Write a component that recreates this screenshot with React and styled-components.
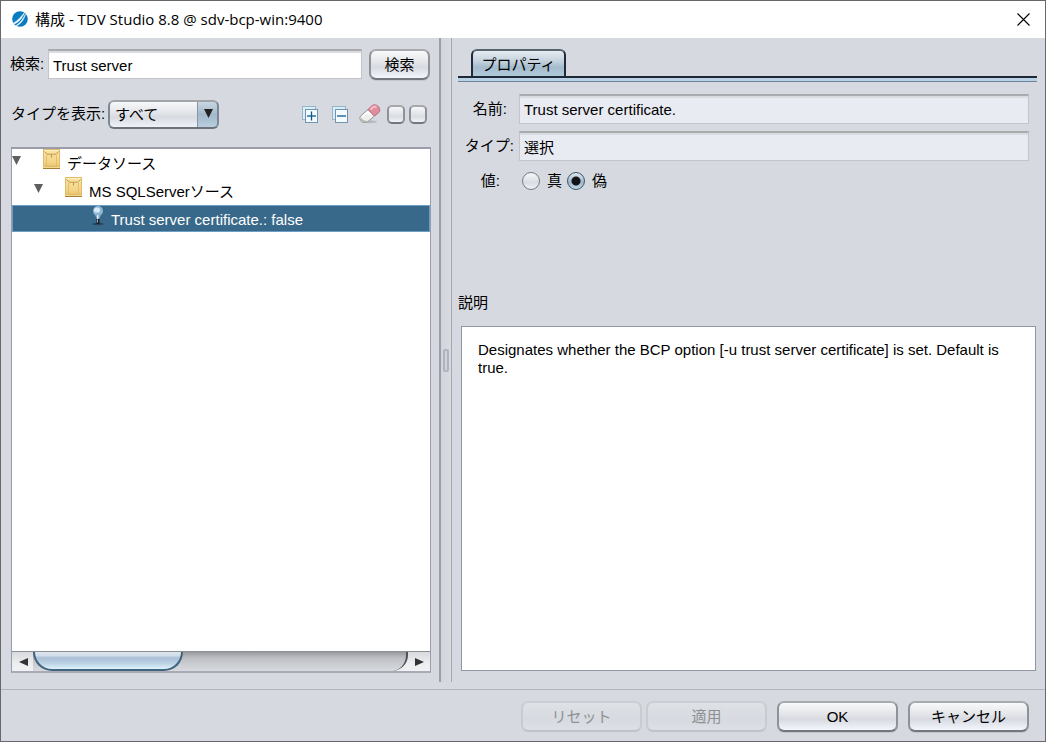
import React, { useState } from "react";
import styled, { createGlobalStyle } from "styled-components";

const GlobalStyle = createGlobalStyle`
  * { box-sizing: border-box; }
  body {
    margin: 0;
    background: #d6d9e0;
    color: #000;
    font: 15px/18px "Liberation Sans", "Noto Sans CJK JP", sans-serif;
  }
  button, input, select { font: inherit; color: inherit; margin: 0; }
`;

const Dialog = styled.div`
  display: flex;
  flex-direction: column;
  min-height: 100vh;
  border: 1px solid #68686c;
  background: #d6d9e0;
`;

const TitleBar = styled.header`
  display: flex;
  align-items: center;
  height: 37px;
  padding: 0 15px 1px 11px;
  background: #fff;
`;

const Title = styled.h1`
  flex: 1;
  margin: 0 0 0 7px;
  font: 400 15px/20px "Open Sans", "Noto Sans CJK JP", sans-serif;
`;

const PlainButton = styled.button`
  display: flex;
  padding: 0;
  border: 0;
  background: none;
`;

const Body = styled.main`
  flex: 1;
  display: flex;
  padding-bottom: 7px;
`;

const LeftPane = styled.section`
  flex: 0 0 438px;
  display: flex;
  flex-direction: column;
  padding: 10px 8px 9px 9px;
`;

const RightPane = styled.section`
  flex: 1;
  min-width: 0;
  display: flex;
  flex-direction: column;
  padding: 11px 9px 11px 6px;
`;

const Splitter = styled.div`
  flex: 0 0 13px;
  display: flex;
  align-items: center;
  justify-content: center;
  border-left: 2px solid #9b9eaa;
  border-right: 1px solid #a4a7af;
  background: linear-gradient(90deg, #d2d5dc, #d8dbe0);
`;

const Grip = styled.span`
  width: 6px;
  height: 23px;
  border: 2px solid #b0b3bc;
  border-radius: 2px;
  background: #d0d3da;
`;

const SearchRow = styled.form`
  display: flex;
  align-items: center;
  height: 32px;
  padding-right: 1px;
`;

const SearchLabel = styled.label`
  flex: 0 0 38px;
  white-space: nowrap;
`;

const TextField = styled.input`
  flex: 1;
  min-width: 0;
  height: 30px;
  padding: 1px 4px 0;
  border: 1px solid #c3c5ca;
  border-top: 2px solid #a9abae;
  border-radius: 0;
  outline: 0;
  background: ${(p) => (p.readOnly ? "#e8ebf2" : "#fff")};
  box-shadow: inset 0 2px 1px #d9dbdf;
`;

const MetalButton = styled.button`
  width: ${(p) => p.$width}px;
  height: 31px;
  padding: 1px 0 0;
  border: 2px solid #8d8f95;
  border-color: #a8aaae #909298 #74767b;
  border-radius: 7px;
  background: linear-gradient(#f8f9fa 0%, #e4e6ea 40%, #d7dae0 60%, #e5e8ef 80%, #f3f6fc 100%);
  box-shadow: 0 1px 0 #c3c6cc;

  &:disabled {
    color: #8e9094;
    border-color: #cbced3 #c8cbd0 #bfc2c7;
    background: linear-gradient(#dee1e5, #d7dae0 60%, #dcdfe6);
    box-shadow: none;
  }
`;

const SearchButton = styled(MetalButton)`
  margin-left: 7px;
`;

const FilterRow = styled.div`
  display: flex;
  align-items: center;
  height: 30px;
  margin-top: 19px;
`;

const FilterLabel = styled.label`
  flex: 0 0 98px;
  padding-left: 1px;
  white-space: nowrap;
`;

const SelectBox = styled.div`
  position: relative;
  width: 111px;
  height: 29px;
`;

const Select = styled.select`
  appearance: none;
  width: 100%;
  height: 100%;
  padding: 1px 26px 0 5px;
  border: 2px solid #85888f;
  border-color: #a2a4a9 #7c8895 #6e7176;
  border-radius: 6px;
  background:
    linear-gradient(#8396a8, #8396a8) right 19px top / 1px 100% no-repeat,
    linear-gradient(#c9d7e2, #a2b8cb 50%, #b8cfdf) right top / 19px 100% no-repeat,
    linear-gradient(#f7f8f9, #e2e4e9 45%, #d7dae0 60%, #eff2f9);
`;

const SelectArrow = styled.svg`
  position: absolute;
  top: 9px;
  right: 6px;
  pointer-events: none;
`;

const Tools = styled.div`
  display: flex;
  align-items: center;
  margin-left: auto;
  padding-right: 4px;
`;

const ToolButton = styled(PlainButton)`
  width: ${(p) => p.$width}px;
`;

const BlankButton = styled.button`
  width: 18px;
  height: 19px;
  padding: 0;
  margin-left: 4px;
  border: 2px solid #8b8d93;
  border-color: #a6a8ac #8f9197 #74767b;
  border-radius: 5px;
  background: linear-gradient(#f6f7f8, #dadde2 65%, #f0f3f8);
`;

const TreePanel = styled.div`
  flex: 1;
  display: flex;
  flex-direction: column;
  margin-top: 18px;
  margin-left: 1px;
  border: 2px solid #9a9da9;
  border-width: 2px 1px 2px 1px;
  border-bottom-color: #a8abb6;
  background: #fff;
`;

const Tree = styled.ul`
  flex: 1;
  margin: 0;
  padding: 0;
  list-style: none;
`;

const TreeRow = styled.li`
  display: flex;
  height: ${(p) => (p.$selected ? 27 : 28)}px;
  padding-left: ${(p) => p.$indent}px;
  color: ${(p) => (p.$selected ? "#fff" : "#000")};
  background: ${(p) => (p.$selected ? "#39698a" : "transparent")};
  border: 1px solid ${(p) => (p.$selected ? "#6f9ec5" : "transparent")};
  border-width: ${(p) => (p.$selected ? "1px" : "0")};
`;

const TreeText = styled.span`
  align-self: center;
  padding-top: 2px;
  margin-left: 7px;
  white-space: nowrap;
`;

const Disclosure = styled.svg`
  flex: none;
  margin: 7px 22px 0 0;
`;

const ScrollBar = styled.div`
  display: flex;
  height: 20px;
  border-top: 1px solid #8c8f96;
  background: linear-gradient(#d8dadd, #eceef0 60%, #f0f2f3);
`;

const ScrollButton = styled.button`
  display: flex;
  align-items: center;
  justify-content: center;
  width: 22px;
  padding: 0;
  border: 0;
  background: none;
`;

const ScrollTrack = styled.div`
  flex: 1;
  display: flex;
  margin-left: -1px;
  border-right: 2px solid #4f5155;
  border-radius: 0 0 16px 0;
  background: linear-gradient(#97999d, #bcbec2 30%, #cccfd4 70%, #d8dae0);
`;

const ScrollThumb = styled.div`
  width: 150px;
  border: 2px solid #41647e;
  border-top: 0;
  border-radius: 0 0 20px 20px;
  background: linear-gradient(#dce5ed, #d3dfea 20%, #a9c0d6 35%, #b9d0e3 65%, #dff3fc);
`;

const TabStrip = styled.div`
  display: flex;
  padding-left: 13px;
`;

const Tab = styled.button`
  width: 95px;
  height: 29px;
  padding: 1px 0 0;
  margin-bottom: -2px;
  border: 2px solid #334252;
  border-color: #59646f #1f2b3c;
  border-bottom: 0;
  border-radius: 6px 6px 0 0;
  background: linear-gradient(#e5ecf1, #c2d0dc 40%, #a4bbcc 60%, #b4cddd);
`;

const TabRule = styled.div`
  height: 6px;
  margin-right: -1px;
  border-top: 2px solid #1f2838;
  border-bottom: 1px solid #6f8498;
  background: #b9d1e4;
`;

const Fields = styled.div`
  display: grid;
  grid-template-columns: 56px 1fr;
  grid-template-rows: 31px 31px 28px;
  row-gap: 6px;
  column-gap: 5px;
  align-items: center;
  margin: 11px 7px 0 0;
`;

const FieldLabel = styled.label`
  justify-self: end;
  padding-right: ${(p) => p.$inset || 0}px;
  white-space: nowrap;
`;

const Choices = styled.div`
  display: flex;
  align-items: center;
  gap: 5px;
  padding-left: 3px;
`;

const Choice = styled.label`
  display: flex;
  align-items: center;
  gap: 7px;
`;

const Radio = styled.input`
  appearance: none;
  width: 18px;
  height: 18px;
  border: 1px solid #76797f;
  border-radius: 50%;
  background: linear-gradient(#f7f8f9, #d9dce2 60%, #eef1f7);

  &:checked {
    border-color: #3d5569;
    background:
      radial-gradient(circle, #111417 0 4px, transparent 5px),
      linear-gradient(#dbe5ed, #9fb7ca 60%, #c0d9e9);
  }
`;

const DescriptionTitle = styled.h2`
  margin: 99px 0 14px 0;
  font-size: 15px;
  line-height: 18px;
  font-weight: 400;
`;

const Description = styled.div`
  flex: 1;
  margin-left: 3px;
  padding: 14px 16px;
  border: 1px solid #9296a2;
  background: #fff;

  p { margin: 0; }
`;

const Footer = styled.footer`
  display: flex;
  justify-content: flex-end;
  height: 52px;
  padding: 11px 16px 0;
  border-top: 1px solid #b2b5bd;
`;

const FooterButton = styled(MetalButton)`
  margin-left: ${(p) => p.$gap}px;
`;

function AppLogo() {
  return (
    <svg width="16" height="16" viewBox="0 0 16 16" aria-hidden="true">
      <circle cx="8" cy="8" r="7.8" fill="#087bc1" />
      <path d="M1 12.500C6 10 9 6 12.500 1.500C10 7.500 7 11 2 13Z" fill="#fff" stroke="#fff" strokeWidth=".5" />
      <path d="M4 14.500C8.500 11.500 11 8 13.500 3C12 9 9 12.500 4.500 15Z" fill="#fff" stroke="#fff" strokeWidth=".4" />
      <path d="M1.500 11C5 9.500 7.500 7 10 3.500" stroke="#43a2da" strokeWidth=".7" fill="none" />
    </svg>
  );
}

function StackIcon({ plus }) {
  return (
    <svg width="17" height="17" viewBox="0 0 17 17" aria-hidden="true">
      <rect x="0.5" y="0.5" width="13" height="13" fill="#d4f1fb" stroke="#9bb3c5" />
      <rect x="3.500" y="3.500" width="12" height="13" fill="#f2fbff" stroke="#7393ae" />
      <path d="M5 10H14" stroke="#10568a" strokeWidth="1.300" />
      {plus && <path d="M9.500 5.500V14.500" stroke="#10568a" strokeWidth="1.300" />}
    </svg>
  );
}

function EraserIcon() {
  return (
    <svg width="22" height="20" viewBox="0 0 22 20" aria-hidden="true">
      <ellipse cx="10" cy="17.800" rx="8" ry="1.500" fill="#b6b9bf" />
      <path d="M1.500 12L9 5.500L15.500 12L9 17.500Q7 19 5 18.500Q2 18 1 15Q.6 13 1.500 12Z" fill="#efefed" stroke="#979593" />
      <path d="M2 14.500Q3 17.500 7.500 17.500" stroke="#bdbbb8" strokeWidth="1.800" fill="none" />
      <path d="M9 5.500L13 1.500Q15 .2 17.500 1.200Q20.500 2.600 20.800 5.500Q21 7.500 19.500 8.800L15.500 12Z" fill="#e08d9d" stroke="#c06a7b" />
      <path d="M11.500 5.500L14.500 2.800Q16 2.200 17.500 3" stroke="#f5bfc8" strokeWidth="2" fill="none" />
      <path d="M4 12L9 8L12 11" stroke="#fff" strokeWidth="2" fill="none" />
    </svg>
  );
}

function CabinetIcon() {
  return (
    <svg width="17" height="21" viewBox="0 0 17 21" aria-hidden="true">
      <defs>
        <linearGradient id="cabinet" x2="0" y2="1">
          <stop stopColor="#f9e3a5" />
          <stop offset=".7" stopColor="#f3d486" />
          <stop offset="1" stopColor="#e2b95e" />
        </linearGradient>
      </defs>
      <rect x=".5" y=".5" width="16" height="19" fill="url(#cabinet)" stroke="#dfbb69" />
      <path d="M0 18.500H17" stroke="#f3d88f" />
      <path d="M0 19.500H17" stroke="#a67c38" />
      <path d="M1.500 2.500L4 5.200H13L15.500 2.500" fill="none" stroke="#be9242" strokeWidth=".9" />
      <path d="M8.500 5.500V8.500" stroke="#be9242" />
      <path d="M3.500 6V17.500H13.500V6" fill="none" stroke="#dcb765" strokeWidth=".8" />
      <path d="M1 1.500H16" stroke="#fff0c0" />
    </svg>
  );
}

function PinIcon() {
  return (
    <svg width="12" height="20" viewBox="0 0 12 20" aria-hidden="true">
      <ellipse cx="6" cy="18" rx="5.500" ry="1.200" fill="#28465c" />
      <circle cx="6" cy="5" r="5" fill="#8fb7d6" />
      <ellipse cx="5" cy="4" rx="3" ry="2.600" fill="#d8eaf7" />
      <path d="M3 8.500H9L7.500 12.500H4.500Z" fill="#82a9c7" />
      <path d="M5 9H6.500V14H5Z" fill="#dcecf6" />
      <path d="M4.500 13H7.500V18H4.500Z" fill="#181f25" />
      <path d="M5 13.500H6V16.500H5Z" fill="#a5b1ba" />
    </svg>
  );
}

function Expander() {
  return (
    <Disclosure width="9" height="9" viewBox="0 0 9 9" aria-hidden="true">
      <path d="M0 0H9L4.500 9Z" fill="#5f5f5f" />
    </Disclosure>
  );
}

export default function App() {
  const [query, setQuery] = useState("Trust server");
  const [value, setValue] = useState("false");

  return (
    <>
      <GlobalStyle />
      <Dialog>
        <TitleBar>
          <AppLogo />
          <Title>構成 - TDV Studio 8.8 @ sdv-bcp-win:9400</Title>
          <PlainButton type="button" aria-label="閉じる">
            <svg width="13" height="13" viewBox="0 0 13 13" aria-hidden="true">
              <path d="M.5 .5L12.500 12.500M12.500 .5L.5 12.500" stroke="#000" strokeWidth="1.100" />
            </svg>
          </PlainButton>
        </TitleBar>

        <Body>
          <LeftPane>
            <SearchRow onSubmit={(e) => e.preventDefault()}>
              <SearchLabel htmlFor="query">検索:</SearchLabel>
              <TextField id="query" value={query} onChange={(e) => setQuery(e.target.value)} />
              <SearchButton $width={61}>検索</SearchButton>
            </SearchRow>

            <FilterRow>
              <FilterLabel htmlFor="kind">タイプを表示:</FilterLabel>
              <SelectBox>
                <Select id="kind" defaultValue="all">
                  <option value="all">すべて</option>
                </Select>
                <SelectArrow width="9" height="9" viewBox="0 0 9 9" aria-hidden="true">
                  <path d="M0 0H9L4.500 9Z" fill="#222" />
                </SelectArrow>
              </SelectBox>
              <Tools>
                <ToolButton type="button" $width={30} aria-label="すべて展開"><StackIcon plus /></ToolButton>
                <ToolButton type="button" $width={27} aria-label="すべて折りたたむ"><StackIcon /></ToolButton>
                <ToolButton type="button" $width={24} aria-label="クリア"><EraserIcon /></ToolButton>
                <BlankButton type="button" aria-label="前へ" />
                <BlankButton type="button" aria-label="次へ" />
              </Tools>
            </FilterRow>

            <TreePanel>
              <Tree>
                <TreeRow $indent={0}>
                  <Expander />
                  <CabinetIcon />
                  <TreeText>データソース</TreeText>
                </TreeRow>
                <TreeRow $indent={22}>
                  <Expander />
                  <CabinetIcon />
                  <TreeText>MS SQLServerソース</TreeText>
                </TreeRow>
                <TreeRow $indent={79} $selected>
                  <PinIcon />
                  <TreeText>Trust server certificate.: false</TreeText>
                </TreeRow>
              </Tree>
              <ScrollBar>
                <ScrollButton type="button" aria-label="左へスクロール">
                  <svg width="9" height="8" viewBox="0 0 9 8" aria-hidden="true"><path d="M9 0V8L0 4Z" fill="#333" /></svg>
                </ScrollButton>
                <ScrollTrack><ScrollThumb /></ScrollTrack>
                <ScrollButton type="button" aria-label="右へスクロール">
                  <svg width="9" height="8" viewBox="0 0 9 8" aria-hidden="true"><path d="M0 0V8L9 4Z" fill="#333" /></svg>
                </ScrollButton>
              </ScrollBar>
            </TreePanel>
          </LeftPane>

          <Splitter><Grip /></Splitter>

          <RightPane>
            <TabStrip><Tab type="button">プロパティ</Tab></TabStrip>
            <TabRule />
            <Fields>
              <FieldLabel htmlFor="name" $inset={7}>名前:</FieldLabel>
              <TextField id="name" readOnly value="Trust server certificate." />
              <FieldLabel htmlFor="type">タイプ:</FieldLabel>
              <TextField id="type" readOnly value="選択" />
              <FieldLabel as="span" id="value-label" $inset={14}>値:</FieldLabel>
              <Choices role="radiogroup" aria-labelledby="value-label">
                <Choice>
                  <Radio type="radio" name="value" checked={value === "true"} onChange={() => setValue("true")} />
                  真
                </Choice>
                <Choice>
                  <Radio type="radio" name="value" checked={value === "false"} onChange={() => setValue("false")} />
                  偽
                </Choice>
              </Choices>
            </Fields>
            <DescriptionTitle>説明</DescriptionTitle>
            <Description>
              <p>Designates whether the BCP option [-u trust server certificate] is set. Default is true.</p>
            </Description>
          </RightPane>
        </Body>

        <Footer>
          <FooterButton type="button" $width={121} $gap={0} disabled>リセット</FooterButton>
          <FooterButton type="button" $width={121} $gap={4} disabled>適用</FooterButton>
          <FooterButton type="button" $width={121} $gap={10}>OK</FooterButton>
          <FooterButton type="button" $width={121} $gap={10}>キャンセル</FooterButton>
        </Footer>
      </Dialog>
    </>
  );
}
